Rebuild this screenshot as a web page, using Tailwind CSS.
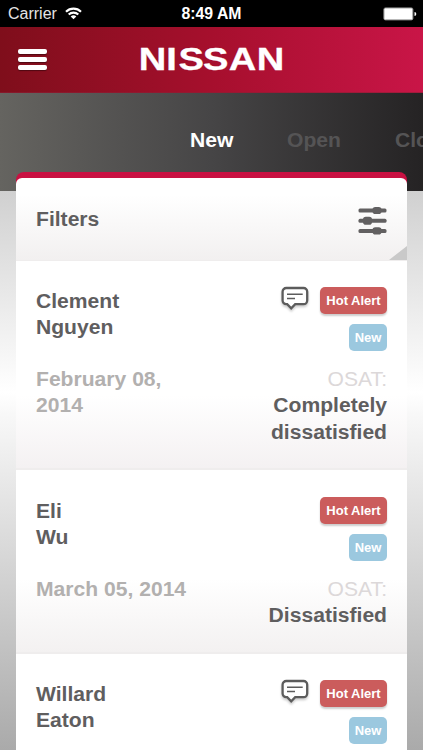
<!DOCTYPE html>
<html lang="en">
<head>
<meta charset="utf-8">
<title>Nissan alerts</title>
<script src="https://cdn.jsdelivr.net/npm/@tailwindcss/browser@4"></script>
</head>
<body class="w-[423px] h-[750px] overflow-hidden font-['Liberation_Sans',Arial,sans-serif] text-[21.1px] leading-[26.4px] font-bold text-[#5f5e5f] bg-[#b0b0b0]">
<svg class="hidden">
  <symbol id="comment" viewBox="0 0 28 28">
    <path d="M5.300 2h17.200a3.700 3.700 0 0 1 3.700 3.700v8.800a3.700 3.700 0 0 1-3.700 3.700h-8.300l-4 4.200-4-4.200h-.9a3.700 3.700 0 0 1-3.700-3.700v-8.800a3.700 3.700 0 0 1 3.700-3.700z" fill="#fff" stroke="#5c5c5c" stroke-width="2.300"/>
    <path d="M6 8.300h15.700M6 12.500h8" stroke="#5c5c5c" stroke-width="1.600"/>
  </symbol>
</svg>
<header class="bg-black h-[27px] grid grid-cols-3 items-center px-2 text-white text-[16px] leading-[27px]">
  <div class="flex items-center gap-2 font-normal text-[#e4e4e4]"><span>Carrier</span>
    <svg width="17" height="13" viewBox="0 0 17 13" fill="none" stroke="#fff" stroke-width="2.100"><path d="M1 4.700a10.600 10.600 0 0 1 15 0M3.700 7.600a6.800 6.800 0 0 1 9.600 0"/><path d="M5.700 9.500a4 4 0 0 1 5.600 0L8.500 12.300z" fill="#fff" stroke="none"/></svg>
  </div>
  <div class="text-center text-[15.800px]">8:49 AM</div>
  <div class="flex justify-end">
    <svg class="-mr-[2px]" width="34" height="14" viewBox="0 0 34 14"><rect x=".9" y=".9" width="29" height="12" rx="1.500" fill="#fff" stroke="#8d8d8d"/><rect x="2" y="2" width="26.800" height="9.800" fill="#fff"/><path d="M31.500 5q1.800 0 1.800 2t-1.800 2z" fill="#fff"/></svg>
  </div>
</header>
<nav class="h-[66px] flex items-center justify-between bg-linear-to-r from-[#7f0e1b] via-[#a60f2d] to-[#c91547] border-b border-[#8b2036]/60 pl-[18px] pr-[137px]">
  <div class="flex flex-col gap-[3px] w-[29px]">
    <i class="h-[5px] rounded-[2px] bg-white shadow-[0_1px_1px_#0006]"></i><i class="h-[5px] rounded-[2px] bg-white shadow-[0_1px_1px_#0006]"></i><i class="h-[5px] rounded-[2px] bg-white shadow-[0_1px_1px_#0006]"></i>
  </div>
  <svg width="149" height="34" viewBox="0 0 149 34"><text transform="scale(1.25 1)" x="1.400 23.500 33.300 52.900 73.400 95.900" y="27.500" font-family="Liberation Sans" font-weight="bold" font-size="30.500" fill="#fff" stroke="#fff" stroke-width=".3">NISSAN</text></svg>
</nav>
<div class="h-[98px] overflow-hidden bg-linear-to-r from-[#656460] from-0% via-[#464546] via-50% to-[#252324]">
  <div class="flex pt-[34px] pl-[190px] gap-[54px] whitespace-nowrap">
    <span class="text-white w-[43px]">New</span><span class="text-[#555455] w-[54px]">Open</span><span class="text-[#555455]">Closed</span>
  </div>
</div>
<main class="flex items-start h-[559px] px-4 bg-[linear-gradient(to_bottom,#d0d0d0_0,#fff_36%,#f8f8f8_40%,#aaa_100%)]">
  <section class="relative -mt-[19px] w-[391px] h-[578px] overflow-hidden rounded-t-[8px] bg-[#c91142] pt-[6px]">
    <div class="relative h-[83px] rounded-t-[6px] bg-linear-to-b from-white from-20% to-[#f2f0f0] border-b border-[#efeded] flex items-start justify-between pl-5 pr-5 pt-[28px]">
      <span>Filters</span>
      <svg class="mt-[1px]" width="29" height="28" viewBox="0 0 29 28" fill="#626061"><rect x=".5" y="1.400" width="28" height="4" rx="1.500"/><rect x=".5" y="11.700" width="28" height="4" rx="1.500"/><rect x=".5" y="21.900" width="28" height="4" rx="1.500"/><rect x="14.500" y="0" width="9" height="7" rx="2.800"/><rect x="5" y="9.700" width="9" height="8" rx="2.800"/><rect x="14.500" y="20.200" width="9" height="7.300" rx="2.800"/></svg>
      <svg class="absolute right-0 bottom-0" width="18" height="14"><path d="M18 0v14H0z" fill="#c9c9c9"/></svg>
    </div>
    <article class="h-[209px] bg-linear-to-b from-white from-65% to-[#f4f1f2] border-b-2 border-[#efeded] px-5 pt-[27px]">
      <div class="flex justify-between h-[78px]">
        <div>Clement<br>Nguyen</div>
        <div class="flex items-start gap-[11px]">
          <svg class="w-[28px] h-[28px] -mt-[2px] drop-shadow-[0_2px_1px_#0003]"><use href="#comment"/></svg>
          <div class="flex flex-col items-end gap-[10px] -mt-[1px] text-[13px] leading-[27px] text-white">
            <span class="h-[27px] w-[67px] text-center rounded-[5px] bg-[#cb5c5c] shadow-[0_2px_2px_#0003]">Hot Alert</span>
            <span class="h-[27px] w-[38px] text-center rounded-[5px] bg-[#9bc8df]">New</span>
          </div>
        </div>
      </div>
      <div class="flex justify-between">
        <div class="text-[#b2b0af]">February 08,<br>2014</div>
        <div class="text-right"><span class="font-normal text-[#dcd8d9]">OSAT:</span><br>Completely<br>dissatisfied</div>
      </div>
    </article>
    <article class="h-[184px] bg-linear-to-b from-white from-60% to-[#f3f1f1] border-b-2 border-[#efeded] px-5 pt-[28px]">
      <div class="flex justify-between h-[78px]">
        <div>Eli<br>Wu</div>
        <div class="flex flex-col items-end gap-[10px] -mt-[1px] text-[13px] leading-[27px] text-white">
          <span class="h-[27px] w-[67px] text-center rounded-[5px] bg-[#cb5c5c] shadow-[0_2px_2px_#0003]">Hot Alert</span>
          <span class="h-[27px] w-[38px] text-center rounded-[5px] bg-[#9bc8df]">New</span>
        </div>
      </div>
      <div class="flex justify-between">
        <div class="text-[#b2b0af]">March 05, 2014</div>
        <div class="text-right"><span class="font-normal text-[#dcd8d9]">OSAT:</span><br>Dissatisfied</div>
      </div>
    </article>
    <article class="h-[184px] bg-white px-5 pt-[27px]">
      <div class="flex justify-between h-[78px]">
        <div>Willard<br>Eaton</div>
        <div class="flex items-start gap-[11px]">
          <svg class="w-[28px] h-[28px] -mt-[2px] drop-shadow-[0_2px_1px_#0003]"><use href="#comment"/></svg>
          <div class="flex flex-col items-end gap-[10px] -mt-[1px] text-[13px] leading-[27px] text-white">
            <span class="h-[27px] w-[67px] text-center rounded-[5px] bg-[#cb5c5c] shadow-[0_2px_2px_#0003]">Hot Alert</span>
            <span class="h-[27px] w-[38px] text-center rounded-[5px] bg-[#9bc8df]">New</span>
          </div>
        </div>
      </div>
    </article>
  </section>
</main>
</body>
</html>
